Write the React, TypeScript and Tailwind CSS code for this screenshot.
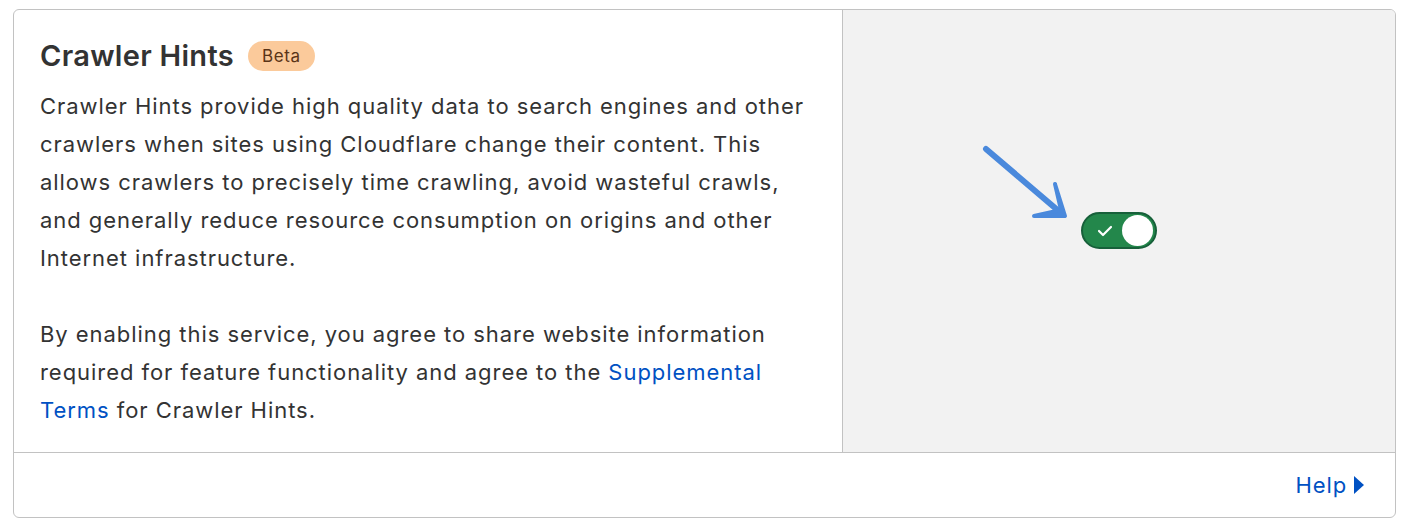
import React from "react";

export default function App() {
  return (
    <div className="w-[1406px] h-[531px] bg-white pt-[9px] pl-[13px]" style={{ fontFamily: "Inter, 'Noto Sans', sans-serif" }}>
      <div className="w-[1383px] h-[509px] border border-[#c2c2c2] rounded-[6px] flex flex-col overflow-hidden">
        <div className="flex flex-1 border-b border-[#c2c2c2]">
          <div className="w-[829px] border-r border-[#c2c2c2] pl-[26px] pr-[20px] pt-[28px]">
            <div className="flex items-center gap-[14px]">
              <h1 className="text-[29px] font-semibold text-[#333] leading-[36px] tracking-[0.3px]">Crawler Hints</h1>
              <span className="bg-[#fbca9b] text-[#5a3417] text-[17px] leading-[30px] px-[14px] tracking-[0.6px] rounded-full">Beta</span>
            </div>
            <p className="mt-[13px] text-[22px] leading-[38px] text-[#333] tracking-[0.95px]">
              Crawler Hints provide high quality data to search engines and other crawlers when sites using Cloudflare change their content. This allows crawlers to precisely time crawling, avoid wasteful crawls, and generally reduce resource consumption on origins and other Internet infrastructure.
            </p>
            <p className="mt-[38px] text-[22px] leading-[38px] text-[#333] tracking-[0.95px] pr-[30px]">
              By enabling this service, you agree to share website information required for feature functionality and agree to the{" "}
              <span className="text-[#0051c3]">Supplemental Terms</span> for Crawler Hints.
            </p>
          </div>
          <div className="flex-1 bg-[#f2f2f2] relative">
            <svg className="absolute left-[138px] top-[134px]" width="92" height="82" viewBox="0 0 92 82">
              <line x1="5" y1="5" x2="80" y2="69" stroke="#4a89dc" strokeWidth="6" strokeLinecap="round" />
              <path d="M84 72 L53 72 L80 66 L74 40 Z" fill="#4a89dc" stroke="#4a89dc" strokeWidth="4" strokeLinejoin="round" />
            </svg>
            <div className="absolute left-[238px] top-[202px] w-[76px] h-[37px] rounded-full bg-[#23874b] border-2 border-[#17603a] flex items-center justify-between pl-[14px] pr-[2px]">
              <svg width="16" height="12" viewBox="0 0 16 12">
                <path d="M2 6 L6 10 L14 2" fill="none" stroke="white" strokeWidth="2.2" strokeLinecap="round" strokeLinejoin="round" />
              </svg>
              <div className="w-[31px] h-[31px] rounded-full bg-white" />
            </div>
          </div>
        </div>
        <div className="h-[64px] flex items-center justify-end pr-[30px]">
          <span className="text-[22px] text-[#0051c3] tracking-[0.9px] flex items-center gap-[6px]">
            Help
            <svg width="12" height="20" viewBox="0 0 12 20"><path d="M1 1 L11 10 L1 19 Z" fill="#0051c3" /></svg>
          </span>
        </div>
      </div>
    </div>
  );
}
